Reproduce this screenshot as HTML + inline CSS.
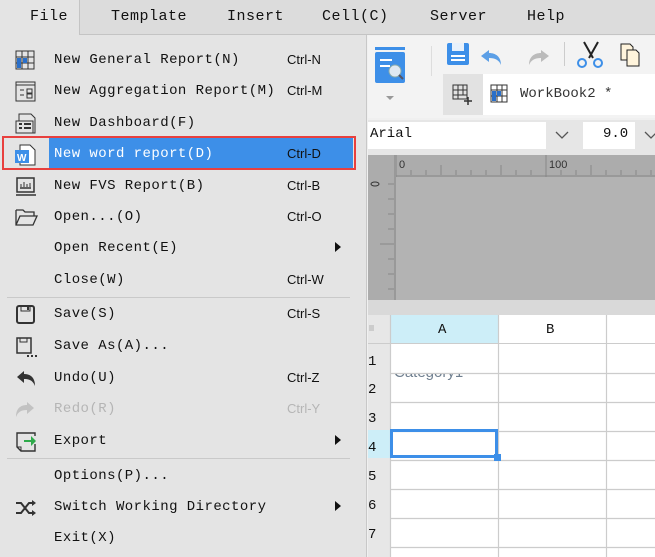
<!DOCTYPE html>
<html><head><meta charset="utf-8"><style>
*{margin:0;padding:0;box-sizing:border-box}
body{width:655px;height:557px;overflow:hidden;background:#f0f0f0;position:relative;font-family:"Liberation Mono","Noto Serif CJK SC",monospace}
.a{position:absolute}
.bar{left:0;top:0;width:655px;height:35px;background:#dcdcdc;border-bottom:1px solid #c4c4c4}
.mi{position:absolute;top:8px;font-size:15px;color:#111;letter-spacing:.5px}
.menu{left:0;top:35px;width:367px;height:522px;background:#e4e4e4;border-right:1px solid #c8c8c8}
.row{position:absolute;left:0;width:366px;height:30px;font-size:14px;letter-spacing:.45px;color:#111}
.row .t{position:absolute;left:54px;top:8px;white-space:nowrap}
.row .k{position:absolute;left:287px;top:8px;font-family:"Liberation Sans",sans-serif;font-size:13px;letter-spacing:0}
.row .ar{position:absolute;left:335px;top:10px;width:0;height:0;border-left:6px solid #111;border-top:5px solid transparent;border-bottom:5px solid transparent}
.row svg{position:absolute;left:15px;top:6px}
.sep{position:absolute;left:7px;width:343px;height:1px;background:#c9c9c9}
.dis{color:#b5b5b5}
</style></head><body>
<div class="a bar"></div>
<div class="a" style="left:0;top:0;width:80px;height:36px;background:#e4e4e4;border-right:1px solid #c4c4c4"></div>
<div class="mi" style="left:30px">File</div>
<div class="mi" style="left:111px">Template</div>
<div class="mi" style="left:227px">Insert</div>
<div class="mi" style="left:322px">Cell(C)</div>
<div class="mi" style="left:430px">Server</div>
<div class="mi" style="left:527px">Help</div>

<!-- right area -->
<div class="a" style="left:368px;top:36px;width:287px;height:82px;background:#f3f3f3"></div>
<svg class="a" style="left:373px;top:44px" width="36" height="62"><rect x="2" y="3" width="30" height="3" fill="#3d8fe8"/><rect x="2" y="8" width="30" height="31" rx="2" fill="#3d8fe8"/><rect x="7" y="15" width="12" height="2" fill="#fff"/><rect x="7" y="21" width="10" height="2" fill="#fff"/><circle cx="22" cy="27" r="6" fill="#dfe8f2" stroke="#8aa" stroke-width="1"/><line x1="26" y1="31" x2="30" y2="35" stroke="#556" stroke-width="2"/><path d="M13 52h8l-4 4z" fill="#999"/></svg>
<div class="a" style="left:431px;top:46px;width:1px;height:30px;background:#ddd"></div>
<svg class="a" style="left:445px;top:40px" width="210" height="30"><rect x="2" y="3" width="22" height="22" rx="2" fill="#3d8fe8"/><rect x="7" y="3" width="12" height="8" fill="#e8f1fb"/><rect x="6" y="15" width="14" height="2" fill="#fff"/><rect x="6" y="19" width="14" height="2" fill="#fff"/><path d="M44 10l-8 6 8 6v-4c6 0 10 2 12 7 0-8-5-12-12-12z" fill="#5c9fe6"/><path d="M96 10l8 6-8 6v-4c-6 0-10 2-12 7 0-8 5-12 12-12z" fill="#bbb"/><rect x="119" y="2" width="1" height="24" fill="#ccc"/><path d="M139 2l9 16M153 2l-9 16" stroke="#222" stroke-width="2"/><circle cx="137" cy="23" r="4" stroke="#3d8fe8" stroke-width="2" fill="none"/><circle cx="153" cy="23" r="4" stroke="#3d8fe8" stroke-width="2" fill="none"/><path d="M176 4h9l3 3v13h-12z" fill="#fff4dc" stroke="#222"/><path d="M182 10h9l3 3v13h-12z" fill="#fff4dc" stroke="#222"/></svg>
<div class="a" style="left:443px;top:74px;width:40px;height:41px;background:#e2e2e2"></div>
<svg class="a" style="left:452px;top:84px" width="22" height="22"><path d="M1 1h14v14H1zM1 6h14M1 11h14M6 1v14M11 1v10" stroke="#333" fill="none"/><path d="M16 13v8M12 17h8" stroke="#333" stroke-width="1.5"/></svg>
<div class="a" style="left:483px;top:74px;width:172px;height:41px;background:#fff"></div>
<svg class="a" style="left:490px;top:84px" width="20" height="20"><path d="M1 1h16v17H1zM1 6h16M1 12h16M7 1v17M12 1v17" stroke="#333" fill="none"/><rect x="2" y="7" width="4" height="10" fill="#2a6fc9"/><rect x="7" y="7" width="4" height="5" fill="#2a6fc9"/></svg>
<div class="a" style="left:520px;top:86px;font-size:14px;color:#333">WorkBook2 *</div>
<div class="a" style="left:368px;top:120px;width:287px;height:35px;background:#e6e6e6"></div>
<div class="a" style="left:368px;top:122px;width:178px;height:27px;background:#fff;font-size:14px;padding:4px 0 0 2px;color:#111">Arial</div>
<svg class="a" style="left:552px;top:128px" width="20" height="14"><path d="M4 4l6 6 6-6" stroke="#555" fill="none" stroke-width="1.3"/></svg>
<div class="a" style="left:583px;top:122px;width:52px;height:27px;background:#fff;font-size:14px;padding:4px 0 0 20px;color:#111">9.0</div>
<svg class="a" style="left:641px;top:128px" width="14" height="14"><path d="M4 4l6 6 6-6" stroke="#555" fill="none" stroke-width="1.3"/></svg>
<div class="a" style="left:368px;top:155px;width:287px;height:145px;background:#b3b3b3"></div>
<div class="a" style="left:368px;top:155px;width:287px;height:22px;background:#acacac;border-bottom:2px solid #999"></div>
<div class="a" style="left:368px;top:155px;width:28px;height:145px;background:#acacac;border-right:2px solid #999"></div>
<svg class="a" style="left:396px;top:155px" width="259" height="22"><g stroke="#888"><path d="M0 0v22M15 15v5M30 15v5M45 15v5M60 15v5M75 15v5M90 15v5M105 15v5M120 15v5M135 15v5M150 0v22M165 15v5M180 15v5M195 15v5M210 15v5M225 15v5M240 15v5M255 15v5"/><path d="M45 10v10M105 10v10M195 10v10"/></g><text x="3" y="13" font-size="11" font-family="Liberation Sans" fill="#333">0</text><text x="153" y="13" font-size="11" font-family="Liberation Sans" fill="#333">100</text></svg>
<svg class="a" style="left:368px;top:177px" width="28" height="123"><g stroke="#888"><path d="M20 7h6M20 22h6M20 37h6M20 52h6M12 67h14M20 82h6M20 97h6M20 112h6"/></g><ellipse cx="7" cy="7" rx="2" ry="4" transform="rotate(90 7 7)" fill="none" stroke="#333"/></svg>
<div class="a" style="left:368px;top:300px;width:287px;height:15px;background:#d9d9d9"></div>
<!-- grid -->
<div class="a" style="left:368px;top:315px;width:287px;height:242px;background:#fff"></div>
<div class="a" style="left:368px;top:315px;width:22px;height:242px;background:#e7e7e7"></div>
<div class="a" style="left:390px;top:315px;width:108px;height:29px;background:#cdeef8"></div>
<div class="a" style="left:368px;top:315px;width:287px;height:29px;border-bottom:1px solid #ccc"></div>
<div class="a" style="left:438px;top:322px;font-size:14px;color:#111">A</div>
<div class="a" style="left:546px;top:322px;font-size:14px;color:#111">B</div>
<div class="a" style="left:368px;top:430px;width:22px;height:28px;background:#cdeef8"></div>
<svg class="a" style="left:368px;top:315px" width="287" height="242"><g stroke="#ccc" stroke-width="1.2"><path d="M22.5 0v242M130.5 0v242M238.5 0v242"/><path d="M22 58.5h265M22 87.5h265M22 116.5h265M22 145.5h265M22 174.5h265M22 203.5h265M22 232.5h265"/></g><g fill="#111" font-size="14" font-family="Liberation Mono"><text x="0" y="50">1</text><text x="0" y="78">2</text><text x="0" y="107">3</text><text x="0" y="136">4</text><text x="0" y="165">5</text><text x="0" y="194">6</text><text x="0" y="223">7</text></g><rect x="1" y="10" width="5" height="6" fill="#ccc"/></svg>
<div class="a" style="left:394px;top:374px;width:100px;height:8px;overflow:hidden"><div class="a" style="left:0;top:-10px;font-family:'Liberation Sans',sans-serif;font-size:15px;color:#6f7f8f">Category1</div></div>
<div class="a" style="left:390px;top:429px;width:108px;height:29px;border:3px solid #3d8fe8"></div>
<div class="a" style="left:494px;top:454px;width:7px;height:7px;background:#3d8fe8"></div>

<!-- menu -->
<div class="a menu"></div>
<div class="a" style="left:49px;top:138px;width:304px;height:30px;background:#3d8fe8"></div>
<div class="a" style="left:2px;top:136px;width:354px;height:34px;border:2px solid #e8403e"></div>

<div class="row" style="top:44px"><svg width="22" height="22"><path d="M1 1h18v18H1zM1 7h18M1 13h18M7 1v18M13 1v18" stroke="#333" fill="none"/><rect x="2" y="8" width="4" height="10" fill="#2a6fc9"/><rect x="8" y="8" width="4" height="5" fill="#2a6fc9"/></svg><span class="t">New General Report(N)</span><span class="k">Ctrl-N</span></div>
<div class="row" style="top:75px"><svg width="22" height="22"><rect x="1" y="1" width="19" height="19" stroke="#333" fill="none"/><path d="M1 4h19" stroke="#333"/><path d="M5 9h4M5 14h4M12 8h5v4h-5zM12 13h5v4h-5z" stroke="#333" fill="none"/></svg><span class="t">New Aggregation Report(M)</span><span class="k">Ctrl-M</span></div>
<div class="row" style="top:107px"><svg width="22" height="22"><path d="M4 1h12l4 4v15H4z" stroke="#333" fill="none"/><path d="M1 8h17v12H1z" stroke="#333" fill="#e4e4e4"/><path d="M4 11h3M9 11h7M4 15h3M9 15h7" stroke="#333" stroke-width="2"/></svg><span class="t">New Dashboard(F)</span></div>
<div class="row" style="top:138px"><svg width="22" height="22"><path d="M5 1h10l5 5v15H5z" stroke="#333" fill="#fff"/><rect x="0" y="6" width="14" height="13" fill="#3d8fe8"/><text x="2" y="17" font-size="10" font-family="Liberation Sans" fill="#fff" font-weight="bold">W</text></svg><span class="t" style="color:#fff">New word report(D)</span><span class="k" style="color:#111">Ctrl-D</span></div>
<div class="row" style="top:170px"><svg width="22" height="22"><rect x="2" y="2" width="17" height="14" stroke="#333" fill="none" stroke-width="1.5"/><path d="M5 12h11M1 19h20" stroke="#333" stroke-width="1.5"/><path d="M6 11v-3M9 11V6M12 11V8M15 11V7" stroke="#333"/></svg><span class="t">New FVS Report(B)</span><span class="k">Ctrl-B</span></div>
<div class="row" style="top:201px"><svg width="24" height="22"><path d="M1 3h7l2 2h9v4M1 3v15h17l4-9H5L1 18" stroke="#333" fill="none" stroke-width="1.3"/></svg><span class="t">Open...(O)</span><span class="k">Ctrl-O</span></div>
<div class="row" style="top:232px"><span class="t">Open Recent(E)</span><span class="ar"></span></div>
<div class="row" style="top:264px"><span class="t">Close(W)</span><span class="k">Ctrl-W</span></div>
<div class="sep" style="top:297px"></div>
<div class="row" style="top:298px"><svg width="22" height="22"><rect x="2" y="2" width="17" height="17" rx="2" stroke="#333" fill="none" stroke-width="2"/><rect x="6" y="2" width="9" height="5" stroke="#333" fill="none"/><rect x="12" y="3" width="2" height="3" fill="#333"/></svg><span class="t">Save(S)</span><span class="k">Ctrl-S</span></div>
<div class="row" style="top:330px"><svg width="22" height="22"><rect x="2" y="2" width="14" height="15" stroke="#333" fill="none" stroke-width="1.5"/><rect x="5" y="2" width="7" height="4" stroke="#333" fill="none"/><path d="M12 20h2M16 20h2M20 20h2" stroke="#333" stroke-width="2"/></svg><span class="t">Save As(A)...</span></div>
<div class="row" style="top:362px"><svg width="22" height="22"><path d="M9 3L2 9l7 6v-4c6 0 9 2 11 7 0-8-4-12-11-12z" fill="#333"/></svg><span class="t">Undo(U)</span><span class="k">Ctrl-Z</span></div>
<div class="row dis" style="top:393px"><svg width="22" height="22"><path d="M12 3l7 6-7 6v-4c-6 0-9 2-11 7 0-8 4-12 11-12z" fill="#c2c2c2"/></svg><span class="t">Redo(R)</span><span class="k">Ctrl-Y</span></div>
<div class="row" style="top:425px"><svg width="22" height="22"><path d="M20 13v7H6l-4-4V2h18v3" stroke="#333" fill="none" stroke-width="1.4"/><path d="M2 16h4v4" stroke="#333" fill="none"/><path d="M9 9h7V5l5 5-5 5v-4H9z" fill="#2eaa4a"/></svg><span class="t">Export</span><span class="ar"></span></div>
<div class="sep" style="top:458px"></div>
<div class="row" style="top:460px"><span class="t">Options(P)...</span></div>
<div class="row" style="top:491px"><svg width="22" height="22"><path d="M1 6h5l8 10h5M1 16h5l8-10h5" stroke="#333" fill="none" stroke-width="2"/><path d="M17 3l4 3-4 3zM17 13l4 3-4 3z" fill="#333"/></svg><span class="t">Switch Working Directory</span><span class="ar"></span></div>
<div class="row" style="top:522px"><span class="t">Exit(X)</span></div>
</body></html>
